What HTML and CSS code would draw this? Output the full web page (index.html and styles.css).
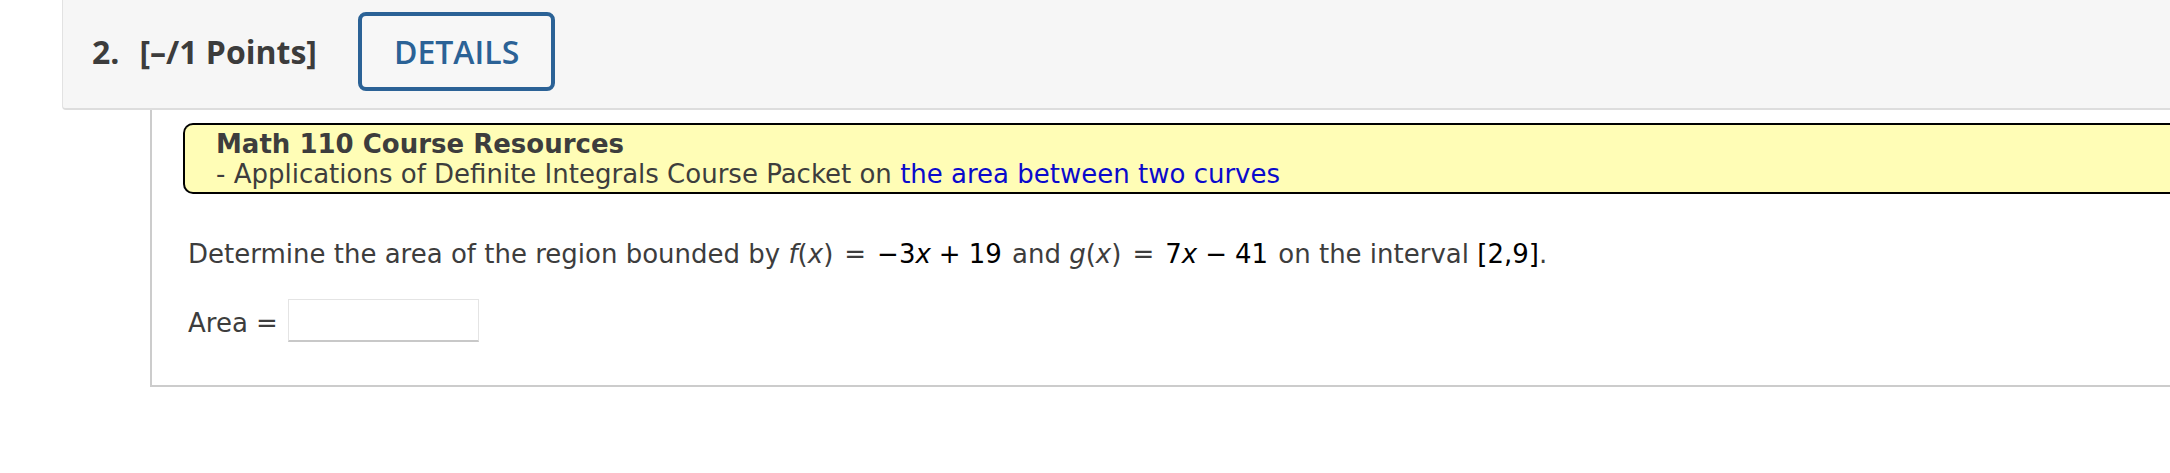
FILE: index.html
```html
<!DOCTYPE html>
<html lang="en">
<head>
<meta charset="utf-8">
<title>Question 2</title>
<link rel="stylesheet" href="styles.css">
</head>
<body>
<div class="question">
  <div class="q-header">
    <span class="q-num">2.</span>
    <span class="q-points">[–/1 Points]</span>
    <button class="details-btn" type="button">DETAILS</button>
  </div>
  <div class="q-body">
    <div class="resources">
      <div class="resources-title">Math 110 Course Resources</div>
      <div class="resources-line">- Applications of Definite Integrals Course Packet on <a class="res-link" href="#">the area between two curves</a></div>
    </div>
    <p class="prompt">Determine the area of the region bounded by <span class="fn"><i>f</i>(<i>x</i>)</span><span class="op eq">=</span><span class="mt">−3<i>x</i></span><span class="op pm mt">+</span><span class="mt num-end">19</span> and <span class="fn"><i>g</i>(<i>x</i>)</span><span class="op eq">=</span><span class="mt">7<i>x</i></span><span class="op pm mt">−</span><span class="mt num-end">41</span> on the interval <span class="mt">[2,9]</span>.</p>
    <div class="answer-row">
      <span class="answer-label">Area =</span>
      <input class="answer-input" type="text" aria-label="Area">
    </div>
  </div>
</div>
</body>
</html>
```
FILE: styles.css
```css
html, body {
  margin: 0;
  padding: 0;
  background: #ffffff;
  overflow: hidden;
}

body {
  font-family: "DejaVu Sans", Verdana, sans-serif;
  color: #3d3d3d;
}

.question {
  margin-left: 62px;
}

.q-header {
  display: flex;
  align-items: flex-start;
  height: 96px;
  padding: 12px 0 0 29px;
  background: #f6f6f6;
  border-left: 1px solid #e2e2e2;
  border-bottom: 2px solid #dddddd;
  border-bottom-left-radius: 4px;
  font-family: "Open Sans", "DejaVu Sans", sans-serif;
  color: #3c3c3c;
}

.q-num,
.q-points {
  font-size: 32px;
  font-weight: 700;
  line-height: 79px;
}

.q-num {
  margin-right: 20px;
}

.q-points {
  margin-right: 41px;
}

.details-btn {
  box-sizing: border-box;
  height: 79px;
  margin: 0;
  padding: 0 32px;
  border: 4px solid #2b6296;
  border-radius: 8px;
  background: #f7f7f7;
  color: #2b6296;
  font-family: "Open Sans", "DejaVu Sans", sans-serif;
  font-size: 32px;
  font-weight: 600;
  line-height: 71px;
}

.q-body {
  margin-left: 88px;
  padding: 13px 0 43px 31px;
  border-left: 2px solid #cccccc;
  border-bottom: 2px solid #cccccc;
}

.resources {
  padding: 4px 0 3px 31px;
  background: #fffdb6;
  border: 2px solid #000000;
  border-right: none;
  border-radius: 10px 0 0 10px;
  font-size: 26px;
  line-height: 30px;
  color: #3d3d3d;
}

.resources-title {
  font-weight: 700;
}

.res-link {
  color: #0a0acc;
  text-decoration: none;
}

.prompt {
  margin: 45px 0 0 5px;
  font-size: 26px;
  line-height: 30px;
}

.fn i,
.mt i {
  font-style: italic;
}

.mt {
  color: #000000;
}

.op {
  display: inline-block;
}

.op.eq {
  margin: 0 11px;
}

.op.pm {
  margin: 0 8px;
}

.num-end {
  margin-right: 2px;
}

.answer-row {
  display: flex;
  align-items: center;
  margin: 30px 0 0 5px;
}

.answer-label {
  font-size: 26px;
  line-height: 30px;
  padding-top: 4px;
}

.answer-input {
  box-sizing: border-box;
  width: 191px;
  height: 43px;
  margin: 0 0 0 10px;
  padding: 0 8px;
  border: 1px solid #e4e4e4;
  border-bottom: 2px solid #c8c8c8;
  background: #ffffff;
  font-family: "DejaVu Sans", Verdana, sans-serif;
  font-size: 26px;
  outline: none;
}
```
